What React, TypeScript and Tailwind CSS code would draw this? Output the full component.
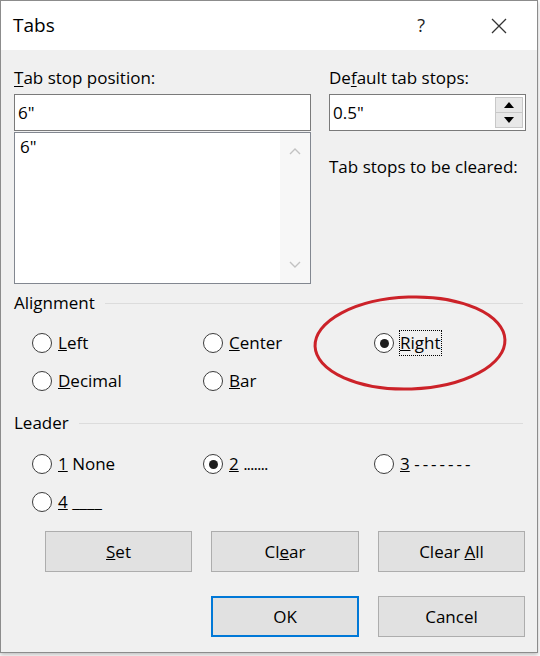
import React from "react";

const font = { fontFamily: '"Open Sans", "Noto Sans", sans-serif' };

function Radio({ checked, children, focus }: { checked?: boolean; children: React.ReactNode; focus?: boolean }) {
  return (
    <div className="flex items-center h-[24px]">
      <span className="w-[20px] h-[20px] rounded-full border border-[#3c3c3c] bg-white flex items-center justify-center shrink-0">
        {checked && <span className="w-[9px] h-[9px] rounded-full bg-[#1f1f1f]" />}
      </span>
      <span
        className={
          "ml-[6px] text-[17px] leading-[24px] text-black whitespace-pre " +
          (focus ? "outline outline-1 outline-dotted outline-black" : "")
        }
      >
        {children}
      </span>
    </div>
  );
}

function GroupTitle({ label }: { label: string }) {
  return (
    <div className="flex items-center h-[24px] pr-[14px]">
      <span className="text-[17px] text-black leading-[24px]">{label}</span>
      <span className="flex-1 ml-[10px] h-px bg-[#dcdcdc]" />
    </div>
  );
}

function Btn({ children, primary }: { children: React.ReactNode; primary?: boolean }) {
  return (
    <div
      className={
        "h-[41px] flex items-center justify-center bg-[#e1e1e1] text-[17px] text-black " +
        (primary ? "border-2 border-[#0078d7]" : "border border-[#adadad]")
      }
    >
      <span className="whitespace-pre">{children}</span>
    </div>
  );
}

export default function App() {
  return (
    <div className="w-[540px] h-[656px] bg-white relative overflow-hidden" style={font}>
      <div className="w-[538px] h-[653px] border border-[#8c8c8c] flex flex-col shadow-[0_2px_4px_rgba(0,0,0,0.25)]">
        {/* TITLE BAR */}
        <div className="h-[49px] bg-white flex items-center pl-[12px] shrink-0">
          <span className="text-[19px] text-black">Tabs</span>
          <span className="ml-auto text-[18px] text-[#222]">?</span>
          <svg className="ml-[66px] mr-[30px]" width="16" height="16" viewBox="0 0 16 16">
            <path d="M1 1 L15 15 M15 1 L1 15" stroke="#333" strokeWidth="1.3" fill="none" />
          </svg>
        </div>

        {/* BODY */}
        <div className="flex-1 bg-[#f0f0f0] pl-[13px] pt-[16px]">
          <div className="flex gap-[18px]">
            <div className="w-[297px]">
              <div className="text-[17px] leading-[24px] text-black">
                <u className="underline-offset-2">T</u>ab stop position:
              </div>
              <div className="mt-[4px] h-[37px] bg-white border border-[#7a7a7a] flex items-center pl-[3px] text-[17px] text-black">
                6"
              </div>
              <div className="mt-px h-[152px] bg-white border border-[#828790] flex">
                <div className="flex-1 pl-[5px] pt-[2px] text-[17px] text-black leading-[24px]">6"</div>
                <div className="w-[30px] bg-[#f7f7f7] flex flex-col items-center justify-between py-[14px]">
                  <svg width="12" height="8" viewBox="0 0 12 8">
                    <path d="M1 7 L6 2 L11 7" stroke="#c2c2c2" strokeWidth="1.4" fill="none" />
                  </svg>
                  <svg width="12" height="8" viewBox="0 0 12 8">
                    <path d="M1 1 L6 6 L11 1" stroke="#c2c2c2" strokeWidth="1.4" fill="none" />
                  </svg>
                </div>
              </div>
            </div>

            <div className="w-[197px]">
              <div className="text-[17px] leading-[24px] text-black">
                De<u className="underline-offset-2">f</u>ault tab stops:
              </div>
              <div className="mt-[4px] h-[37px] bg-white border border-[#7a7a7a] flex items-center pl-[3px] pr-[2px] text-[17px] text-black">
                <span className="flex-1">0.5"</span>
                <div className="w-[28px] h-[31px] flex flex-col">
                  <div className="flex-1 bg-[#e8e8e8] border border-[#c8c8c8] flex items-center justify-center">
                    <svg width="10" height="6" viewBox="0 0 10 6">
                      <path d="M0 6 L5 0 L10 6 Z" fill="#000" />
                    </svg>
                  </div>
                  <div className="flex-1 bg-[#e8e8e8] border border-t-0 border-[#c8c8c8] flex items-center justify-center">
                    <svg width="10" height="6" viewBox="0 0 10 6">
                      <path d="M0 0 L5 6 L10 0 Z" fill="#000" />
                    </svg>
                  </div>
                </div>
              </div>
              <div className="mt-[24px] text-[17px] leading-[24px] text-black whitespace-nowrap">
                Tab stops to be cleared:
              </div>
            </div>
          </div>

          {/* ALIGNMENT */}
          <div className="mt-[7px]">
            <GroupTitle label="Alignment" />
            <div className="grid grid-cols-[171px_171px_1fr] gap-y-[14px] pl-[18px] mt-[16px]">
              <Radio>
                <u>L</u>eft
              </Radio>
              <Radio>
                <u>C</u>enter
              </Radio>
              <Radio checked focus>
                <u>R</u>ight
              </Radio>
              <Radio>
                <u>D</u>ecimal
              </Radio>
              <Radio>
                <u>B</u>ar
              </Radio>
            </div>
          </div>

          {/* LEADER */}
          <div className="mt-[18px]">
            <GroupTitle label="Leader" />
            <div className="grid grid-cols-[171px_171px_1fr] gap-y-[14px] pl-[18px] mt-[17px]">
              <Radio>
                <u>1</u> None
              </Radio>
              <Radio checked>
                <u>2</u> <span className="tracking-[-1px]">.......</span>
              </Radio>
              <Radio>
                <u>3</u> <span className="tracking-[3px]">-------</span>
              </Radio>
              <Radio>
                <u>4</u> ____
              </Radio>
            </div>
          </div>

          {/* BUTTONS */}
          <div className="grid grid-cols-[147px_148px_147px] gap-x-[19px] gap-y-[24px] pl-[31px] mt-[17px]">
            <Btn>
              <u>S</u>et
            </Btn>
            <Btn>
              Cl<u>e</u>ar
            </Btn>
            <Btn>
              Clear <u>A</u>ll
            </Btn>
            <div />
            <Btn primary>OK</Btn>
            <Btn>Cancel</Btn>
          </div>
        </div>
      </div>

      {/* red annotation ellipse */}
      <svg className="absolute left-[312px] top-[294px]" width="196" height="98" viewBox="0 0 196 98">
        <ellipse cx="98" cy="49" rx="95" ry="46" stroke="#cc2229" strokeWidth="3" fill="none" transform="rotate(-2 98 49)" />
      </svg>
    </div>
  );
}
